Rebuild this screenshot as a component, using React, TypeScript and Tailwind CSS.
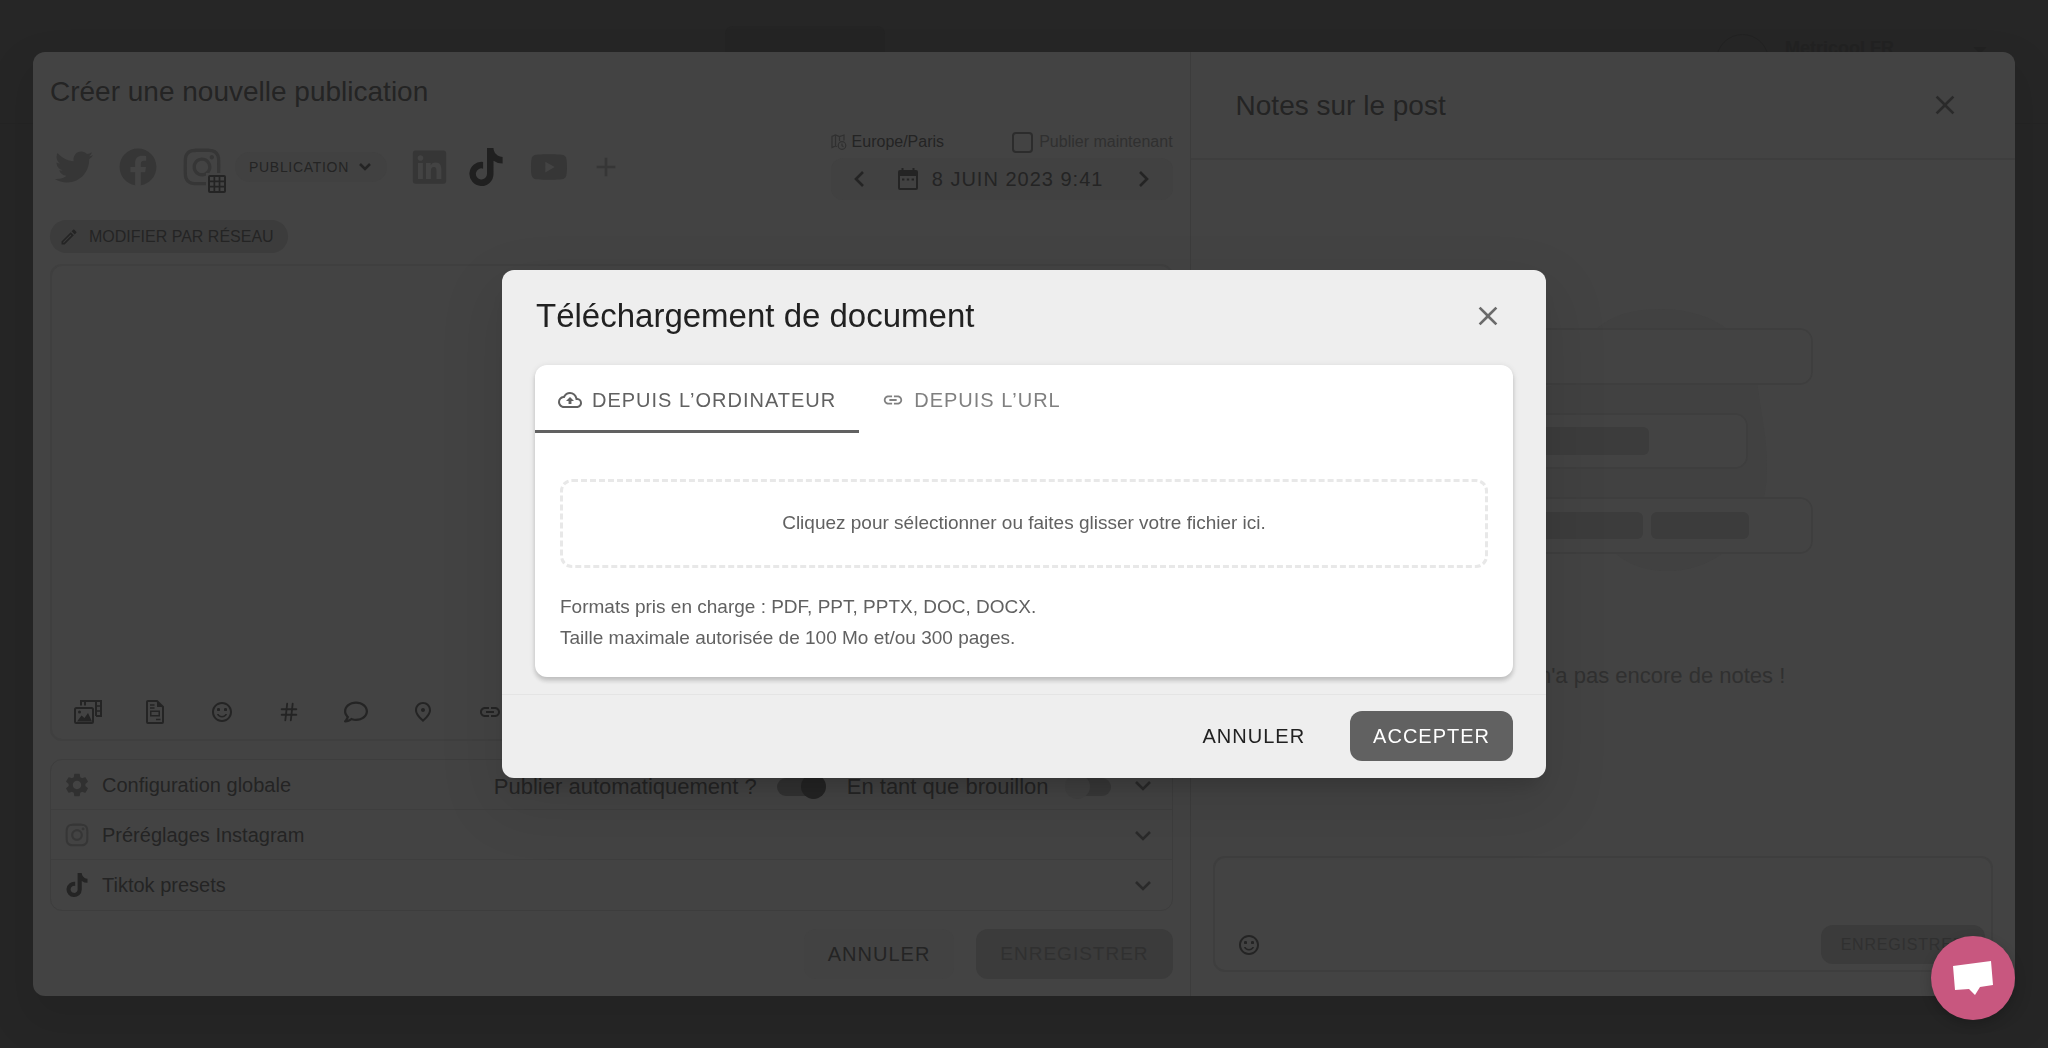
import React, { ReactNode, useState } from "react";
import { FaFacebook, FaInstagram, FaLinkedin, FaRegComment, FaTiktok, FaTwitter, FaYoutube } from "react-icons/fa";
import {
  MdAdd,
  MdArrowDropDown,
  MdClose,
  MdLink,
  MdOutlineBackup,
  MdOutlineEdit,
  MdOutlinePlace,
  MdSentimentSatisfiedAlt,
  MdSettings,
} from "react-icons/md";
import { Hash } from "lucide-react";
import clsx from "clsx";

const GridIcon = () => (
  <svg viewBox="0 0 18 18" className="h-[18px] w-[18px]" aria-hidden="true">
    <rect width="18" height="18" rx="2" fill="#242424" />
    <path
      fill="#434343"
      d="M2 2h3.500v3.500H2zM7.200 2h3.500v3.500H7.200zM12.400 2H16v3.500h-3.600zM2 7.200h3.500v3.500H2zM7.200 7.200h3.500v3.500H7.200zM12.400 7.200H16v3.500h-3.600zM2 12.400h3.500V16H2zM7.200 12.400h3.500V16H7.200zM12.400 12.400H16V16h-3.600z"
    />
  </svg>
);

const MapClockIcon = () => (
  <svg viewBox="0 0 16 16" className="h-4 w-4 text-[#303030]" fill="none" stroke="currentColor" strokeWidth="1.2" aria-hidden="true">
    <path d="M6 12.500 4.500 12 1 13.500V2.500L4.500 1l4 1.500L13 1v5.500M4.500 1v11M8.500 2.500V7" />
    <circle cx="11" cy="11.500" r="3.800" />
    <path d="M11 9.500v2.200l1.500 1" />
  </svg>
);

const CalendarIcon = () => (
  <svg viewBox="0 0 20 22" className="h-[22px] w-5" fill="currentColor" aria-hidden="true">
    <path
      fillRule="evenodd"
      d="M3.500 0h2v2h9V0h2v2H18a2 2 0 0 1 2 2v16a2 2 0 0 1-2 2H2a2 2 0 0 1-2-2V4a2 2 0 0 1 2-2h1.500zM2 8v12h16V8z"
    />
    <path d="M4 10.500h2.400v2H4zM8.800 10.500h2.400v2H8.800zM13.600 10.500H16v2h-2.400z" />
  </svg>
);

// a film strip with a picture laid over its lower left corner
const MediaIcon = () => (
  <svg viewBox="0 0 28 24" className="h-6 w-7" fill="none" stroke="currentColor" strokeWidth="2" aria-hidden="true">
    <rect x="1" y="8" width="18" height="15" rx="1.500" />
    <path d="M3 21.500l4.500-6 3 2.500 3.500-5 4 8.500z" fill="currentColor" stroke="none" />
    <circle cx="5.500" cy="12" r="1.500" fill="currentColor" stroke="none" />
    <path d="M7 5.500V1h20v15h-5M22 1v15M11 1v4.500" />
    <path d="M22 6h5M22 11h5" strokeWidth="1.500" />
  </svg>
);

const DocumentIcon = () => (
  <svg viewBox="0 0 18 24" className="h-6 w-[18px]" fill="none" stroke="currentColor" strokeWidth="2" aria-hidden="true">
    <path d="M11 1H2a1 1 0 0 0-1 1v20a1 1 0 0 0 1 1h14a1 1 0 0 0 1-1V7z" />
    <path d="M11 1v6h6z" fill="currentColor" stroke="none" />
    <path d="M4 5h4.500M4 8h4.500M10 19.500h4.500" strokeWidth="1.500" />
    <rect x="4.750" y="11.250" width="8.500" height="4.500" strokeWidth="1.500" />
  </svg>
);

const Chevron = ({ className, d }: { className?: string; d: string }) => (
  <svg viewBox="0 0 16 16" className={clsx("h-4 w-4", className)} fill="none" stroke="currentColor" aria-hidden="true">
    <path d={d} strokeWidth="2.600" />
  </svg>
);

// faint artwork of the empty notes panel
const EmptyNotes = () => (
  <svg viewBox="0 0 420 262" className="h-[262px] w-[420px]" fill="none" aria-hidden="true">
    <path
      d="M268 0c58 0 92 34 96 72 4 32 10 58 10 82 0 42-8 62-34 82-38 36-98 34-126 0C168 200 60 250 40 160 20 60 170 110 186 50 196 12 230 0 268 0z"
      fill="#414141"
    />
    <g fill="#434343" stroke="#3e3e3e" strokeWidth="1.500">
      <rect x="1" y="20" width="418" height="55" rx="12" />
      <rect x="66" y="105" width="288" height="54" rx="12" />
      <rect x="1" y="189" width="418" height="55" rx="12" />
    </g>
    <g fill="#3c3c3c">
      <rect x="110" y="118" width="146" height="28" rx="6" />
      <rect x="110" y="203" width="140" height="27" rx="6" />
      <rect x="258" y="203" width="98" height="27" rx="6" />
    </g>
  </svg>
);

function ToolButton({ label, children }: { label: string; children: ReactNode }) {
  return (
    <button type="button" aria-label={label} className="flex h-8 w-8 items-center justify-center">
      {children}
    </button>
  );
}

function Toggle({ label, on }: { label: string; on?: boolean }) {
  const [checked, setChecked] = useState(!!on);

  return (
    <label className="flex items-center gap-5 text-[22px]">
      {label}
      <span className={clsx("relative flex h-[18px] w-[42px] items-center rounded-full", checked ? "bg-[#323232]" : "bg-[#383838]")}>
        <input type="checkbox" className="absolute inset-0 opacity-0" checked={checked} onChange={() => setChecked(!checked)} />
        <span className={clsx("h-[25px] w-[25px] shrink-0 rounded-full", checked ? "ml-6 bg-[#242424]" : "-ml-1 bg-[#404040]")} />
      </span>
    </label>
  );
}

function PresetRow({ icon, title, children }: { icon: ReactNode; title: string; children?: ReactNode }) {
  return (
    <div className="flex h-[50px] items-center border-b border-[#3e3e3e] pr-[21px] pl-[14px] last:border-b-0">
      <span className="flex w-6 justify-center">{icon}</span>
      <span className="ml-[13px] text-xl">{title}</span>
      <div className="ml-auto flex items-center gap-6">
        {children}
        <button type="button" aria-label={title} className="text-[#2a2a2a]">
          <Chevron d="M1 5l7 7 7-7" />
        </button>
      </div>
    </div>
  );
}

function PageBehind() {
  return (
    <div className="absolute inset-x-0 top-0 flex h-[124px] items-start justify-between border-b border-[#242424] text-[#222222]">
      <div className="mt-[26px] ml-[725px] h-20 w-40 rounded-t-lg bg-[#242424]" />
      <div className="mt-[34px] mr-[52px] flex items-start gap-4 text-lg">
        <span className="h-[53px] w-[53px] rounded-full border border-[#222222]" />
        <span className="font-bold">Metricool FR</span>
        <MdArrowDropDown className="ml-[54px] h-8 w-8" />
      </div>
    </div>
  );
}

function Editor() {
  return (
    <section className="flex min-w-0 flex-col border-r border-[#3c3c3c] px-[17px] pb-[17px]">
      <h1 className="mt-[22px] text-[28px] leading-9">Créer une nouvelle publication</h1>

      <div className="mt-5 flex items-start justify-between">
        <div className="mt-4 flex items-center text-[#363636]">
          <button type="button" aria-label="Twitter" className="ml-[5px]">
            <FaTwitter className="h-[38px] w-[38px]" />
          </button>
          <button type="button" aria-label="Facebook" className="ml-[26px]">
            <FaFacebook className="h-[38px] w-[38px]" />
          </button>
          <button type="button" aria-label="Instagram" className="relative ml-6">
            <FaInstagram className="h-[42px] w-[42px]" />
            <span className="absolute right-[-3px] bottom-[-5px] border-t-2 border-l-2 border-[#434343]">
              <GridIcon />
            </span>
          </button>
          <button type="button" className="ml-3 flex h-[30px] items-center gap-2 rounded-full bg-[#414141] px-[14px] text-sm tracking-wider text-[#242424]">
            PUBLICATION
            <Chevron d="M3 5l5 5 5-5" />
          </button>
          <button type="button" aria-label="LinkedIn" className="ml-[25px]">
            <FaLinkedin className="h-[38px] w-[35px]" />
          </button>
          <button type="button" aria-label="TikTok" className="ml-5 text-[#202020]">
            <FaTiktok className="h-[38px] w-[38px]" />
          </button>
          <button type="button" aria-label="YouTube" className="ml-[25px]">
            <FaYoutube className="h-[38px] w-[38px]" />
          </button>
          <button type="button" aria-label="Ajouter un réseau" className="ml-[22px]">
            <MdAdd className="h-8 w-8" />
          </button>
        </div>

        <div className="w-[342px]">
          <div className="flex items-center justify-between text-base">
            <span className="flex items-center gap-[5px]">
              <MapClockIcon />
              Europe/Paris
            </span>
            <label className="flex items-center gap-[6px] text-[#303030]">
              <input type="checkbox" className="h-[21px] w-[21px] appearance-none rounded-sm border-2 border-[#2c2c2c]" />
              Publier maintenant
            </label>
          </div>
          <div className="mt-1 flex h-[42px] items-center justify-between rounded-xl bg-[#414141] pr-[22px] pl-5">
            <button type="button" aria-label="Jour précédent">
              <Chevron d="M12 1L5 8l7 7" />
            </button>
            <button type="button" className="flex items-center gap-[14px] text-xl tracking-wider">
              <CalendarIcon />8 JUIN 2023 9:41
            </button>
            <button type="button" aria-label="Jour suivant">
              <Chevron d="M5 1l7 7-7 7" />
            </button>
          </div>
        </div>
      </div>

      <button type="button" className="mt-5 flex h-[33px] items-center gap-[10px] self-start rounded-full bg-[#3c3c3c] pr-[14px] pl-[9px] text-base">
        <MdOutlineEdit className="h-5 w-5" />
        MODIFIER PAR RÉSEAU
      </button>

      <div className="mt-[11px] flex flex-1 flex-col rounded-xl border-2 border-[#3f3f3f]">
        <textarea aria-label="Texte de la publication" className="w-full flex-1 resize-none p-4 outline-none" />
        <div className="flex items-center gap-[35px] pb-[11px] pl-5">
          <ToolButton label="Ajouter une image">
            <MediaIcon />
          </ToolButton>
          <ToolButton label="Ajouter un document">
            <DocumentIcon />
          </ToolButton>
          <ToolButton label="Émojis">
            <MdSentimentSatisfiedAlt className="h-6 w-6" />
          </ToolButton>
          <ToolButton label="Hashtags">
            <Hash className="h-[22px] w-[22px]" strokeWidth={2} />
          </ToolButton>
          <ToolButton label="Premier commentaire">
            <FaRegComment className="h-6 w-6" />
          </ToolButton>
          <ToolButton label="Lieu">
            <MdOutlinePlace className="h-6 w-6" />
          </ToolButton>
          <ToolButton label="Lien">
            <MdLink className="h-6 w-6" />
          </ToolButton>
        </div>
      </div>

      <div className="mt-[18px] rounded-xl border border-[#3d3d3d]">
        <PresetRow icon={<MdSettings className="h-7 w-7 shrink-0 text-[#303030]" />} title="Configuration globale">
          <div className="flex gap-7 pt-1">
            <Toggle label="Publier automatiquement ?" on />
            <Toggle label="En tant que brouillon" />
          </div>
        </PresetRow>
        <PresetRow icon={<FaInstagram className="h-[26px] w-[26px] shrink-0 text-[#363636]" />} title="Préréglages Instagram" />
        <PresetRow icon={<FaTiktok className="h-6 w-6" />} title="Tiktok presets" />
      </div>

      <div className="mt-[18px] flex justify-end gap-[22px] text-xl tracking-wider">
        <button type="button" className="h-[50px] rounded-xl bg-[#424242] px-6">
          ANNULER
        </button>
        <button type="button" disabled className="h-[50px] rounded-xl bg-[#3b3b3b] px-6 text-[19px] text-[#303030]">
          ENREGISTRER
        </button>
      </div>
    </section>
  );
}

function Notes() {
  return (
    <section className="flex min-w-0 flex-col">
      <header className="flex h-[108px] items-center justify-between border-b-2 border-[#3e3e3e] pr-[54px] pl-[45px]">
        <h2 className="pt-[2px] text-[28px]">Notes sur le post</h2>
        <button type="button" aria-label="Fermer" className="text-[#2a2a2a]">
          <MdClose className="h-8 w-8" />
        </button>
      </header>
      <div className="flex flex-1 flex-col items-center justify-center pb-4">
        <EmptyNotes />
        <p className="mt-[88px] text-[22px] text-[#303030]">Ce contenu n'a pas encore de notes !</p>
      </div>
      <form className="mx-[22px] mb-6 flex h-[116px] flex-col justify-between rounded-xl border-2 border-[#3e3e3e]">
        <textarea aria-label="Note" className="w-full flex-1 resize-none p-3 outline-none" />
        <div className="flex items-center justify-between pr-[6px] pb-[6px] pl-[22px]">
          <button type="button" aria-label="Émojis">
            <MdSentimentSatisfiedAlt className="h-6 w-6" />
          </button>
          <button type="button" disabled className="h-[39px] rounded-xl bg-[#3b3b3b] px-5 text-base tracking-wider text-[#303030]">
            ENREGISTRER
          </button>
        </div>
      </form>
    </section>
  );
}

function UploadDialog() {
  const [tab, setTab] = useState("computer");
  const tabs = [
    { id: "computer", title: "DEPUIS L’ORDINATEUR", icon: <MdOutlineBackup className="h-6 w-6" /> },
    { id: "url", title: "DEPUIS L’URL", icon: <MdLink className="h-[22px] w-[22px]" /> },
  ];

  return (
    <div
      role="dialog"
      aria-labelledby="upload-title"
      className="w-[1044px] max-w-full rounded-xl bg-[#eeeeee] shadow-[0_14px_20px_-8px_rgba(0,0,0,0.16),0_24px_60px_10px_rgba(0,0,0,0.08)]"
    >
      <header className="flex h-[95px] items-center justify-between pr-[42px] pb-[3px] pl-[34px]">
        <h2 id="upload-title" className="text-[33px] text-[#212121]">
          Téléchargement de document
        </h2>
        <button type="button" aria-label="Fermer" className="text-[#6b6b6b]">
          <MdClose className="h-8 w-8" />
        </button>
      </header>

      <div className="mx-[33px] rounded-xl bg-white text-[19px] text-[#616161] shadow-[0_4px_4px_rgba(0,0,0,0.14),0_1px_6px_rgba(0,0,0,0.1)]">
        <div role="tablist" className="flex">
          {tabs.map(({ id, title, icon }) => (
            <button
              key={id}
              type="button"
              role="tab"
              aria-selected={tab === id}
              onClick={() => setTab(id)}
              className={clsx("flex h-[68px] items-center gap-[10px] border-b-3 px-[23px] pt-1 text-xl tracking-wider", {
                "border-[#616161]": tab === id,
                "border-transparent text-[#808080]": tab !== id,
              })}
            >
              {icon}
              {title}
            </button>
          ))}
        </div>
        <div className="px-[25px] pt-[46px] pb-6">
          <label className="flex h-[89px] cursor-pointer items-center justify-center rounded-xl border-3 border-dashed border-[#e8e8e8]">
            Cliquez pour sélectionner ou faites glisser votre fichier ici.
            <input type="file" className="sr-only" accept=".pdf,.ppt,.pptx,.doc,.docx" />
          </label>
          <p className="mt-[23px] leading-[31px]">
            Formats pris en charge : PDF, PPT, PPTX, DOC, DOCX.
            <br />
            Taille maximale autorisée de 100 Mo et/ou 300 pages.
          </p>
        </div>
      </div>

      <footer className="mt-[17px] flex justify-end gap-[22px] border-t border-[#e4e4e4] px-[33px] pt-4 pb-[17px] text-xl tracking-wider text-[#212121]">
        <button type="button" className="h-[50px] px-[23px]">
          ANNULER
        </button>
        <button type="button" className="h-[50px] rounded-xl bg-[#616161] px-[23px] text-white">
          ACCEPTER
        </button>
      </footer>
    </div>
  );
}

export default function App() {
  return (
    <div className="relative flex min-h-screen bg-[#262626] px-[33px] py-[52px] font-['Liberation_Sans',Arial,sans-serif] text-[#242424]">
      <PageBehind />
      <main className="relative grid flex-1 grid-cols-[1157fr_824fr] overflow-hidden rounded-xl bg-[#434343] shadow-[0_20px_40px_10px_rgba(0,0,0,0.08)]">
        <Editor />
        <Notes />
      </main>

      <div className="fixed inset-0 flex items-center justify-center">
        <UploadDialog />
      </div>

      <button
        type="button"
        aria-label="Ouvrir le chat"
        className="fixed right-[33px] bottom-7 flex h-[84px] w-[84px] items-center justify-center rounded-full bg-[#c8577f] shadow-[0_4px_12px_rgba(0,0,0,0.2)]"
      >
        <svg viewBox="0 0 42 34" className="h-[34px] w-[42px]" fill="#ffffff" aria-hidden="true">
          <path d="M1 5L39 0l2 24-13 2-5 8-6-6-14 1z" />
        </svg>
      </button>
    </div>
  );
}
